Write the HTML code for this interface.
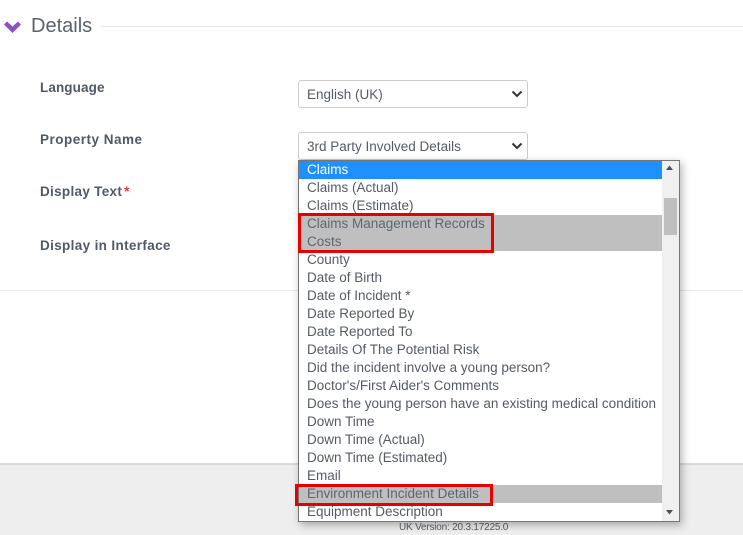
<!DOCTYPE html>
<html><head><meta charset="utf-8">
<style>
html,body{margin:0;padding:0;background:#fff}
body{width:743px;height:535px;position:relative;overflow:hidden;font-family:"Liberation Sans",sans-serif;color:#4f5661}
.a{position:absolute;white-space:nowrap}
.lbl{left:40px;font-weight:bold;font-size:13.5px;line-height:18px;color:#515967;letter-spacing:.3px}
.sel{position:absolute;left:298px;width:228px;height:26px;border:1px solid #ccc;border-radius:3px;background:#fff;font-size:13.5px;line-height:28px;text-indent:8px;color:#555b66}
.sel svg{position:absolute;left:212px;top:9px}
#list{position:absolute;left:298px;top:160px;width:380px;height:360px;border:1px solid #767676;background:#fff;box-shadow:2px 3px 8px rgba(0,0,0,.3);overflow:hidden}
.i{position:absolute;left:0;width:363px;height:18px;line-height:18px;font-size:13.5px;padding-left:8px;box-sizing:border-box;color:#555b66;white-space:nowrap}
.g{background:#bfbfbf;color:#5f6570}
.s{background:#1e90ff;color:#fff}
.rb{position:absolute;border:3px solid #e60000;box-sizing:border-box}
</style></head><body>
<div class="a" style="left:0;top:463px;width:743px;height:72px;background:#eee;border-top:2px solid #d9d9d9;box-sizing:border-box"></div>
<div class="a" style="left:0;top:290px;width:743px;height:1px;background:#eaeaea"></div>
<div class="a" style="left:101px;top:26px;width:642px;height:1px;background:#e8e8e8"></div>
<svg class="a" style="left:4px;top:21px" width="17" height="12" viewBox="0 0 17 12"><path d="M0 3.5L3 .5L8.5 5.5L14 .5L17 3.5L8.5 12Z" fill="#8a52c0"/></svg>
<div class="a" style="left:31px;top:13px;font-size:20px;line-height:26px;color:#5a6270">Details</div>
<div class="a lbl" style="top:79px;letter-spacing:.1px">Language</div>
<div class="a lbl" style="top:131px;letter-spacing:.5px">Property Name</div>
<div class="a lbl" style="top:183px">Display Text<span style="color:#f03040;margin-left:2px">*</span></div>
<div class="a lbl" style="top:237px;letter-spacing:.35px">Display in Interface</div>
<div class="sel" style="top:80px">English (UK)<svg width="12" height="8" viewBox="0 0 12 8"><path d="M1.5 1.5L6 6L10.5 1.5" fill="none" stroke="#333" stroke-width="2"/></svg></div>
<div class="sel" style="top:132px">3rd Party Involved Details<svg width="12" height="8" viewBox="0 0 12 8"><path d="M1.5 1.5L6 6L10.5 1.5" fill="none" stroke="#333" stroke-width="2"/></svg></div>
<div class="a" style="left:399px;top:521px;font-size:10px;letter-spacing:-.2px;line-height:14px;color:#5c6068">UK Version: 20.3.17225.0</div>
<div id="list">
<div class="i s" style="top:0">Claims</div>
<div class="i" style="top:18px">Claims (Actual)</div>
<div class="i" style="top:36px">Claims (Estimate)</div>
<div class="i g" style="top:54px">Claims Management Records</div>
<div class="i g" style="top:72px">Costs</div>
<div class="i" style="top:90px">County</div>
<div class="i" style="top:108px">Date of Birth</div>
<div class="i" style="top:126px">Date of Incident *</div>
<div class="i" style="top:144px">Date Reported By</div>
<div class="i" style="top:162px">Date Reported To</div>
<div class="i" style="top:180px">Details Of The Potential Risk</div>
<div class="i" style="top:198px">Did the incident involve a young person?</div>
<div class="i" style="top:216px">Doctor's/First Aider's Comments</div>
<div class="i" style="top:234px">Does the young person have an existing medical condition</div>
<div class="i" style="top:252px">Down Time</div>
<div class="i" style="top:270px">Down Time (Actual)</div>
<div class="i" style="top:288px">Down Time (Estimated)</div>
<div class="i" style="top:306px">Email</div>
<div class="i g" style="top:324px">Environment Incident Details</div>
<div class="i" style="top:342px">Equipment Description</div>
<div class="a" style="left:363px;top:0;width:17px;height:360px;background:#f0f0f0"></div>
<div class="a" style="left:365px;top:37px;width:13px;height:37px;background:#bfbfbf"></div>
<svg class="a" style="left:366px;top:4px" width="9" height="6"><path d="M4.5 0.5L8 5H1Z" fill="#505050"/></svg>
<svg class="a" style="left:366px;top:348px" width="9" height="6"><path d="M1 1H8L4.5 5.5Z" fill="#505050"/></svg>
</div>
<div class="rb" style="left:298px;top:213px;width:196px;height:40px"></div>
<div class="rb" style="left:295px;top:484px;width:198px;height:22px"></div>
</body></html>
